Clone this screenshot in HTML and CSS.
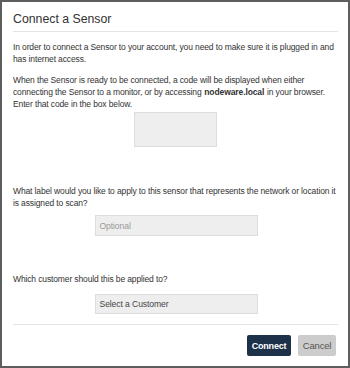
FILE: index.html
```html
<!DOCTYPE html>
<html>
<head>
<meta charset="utf-8">
<link rel="stylesheet" href="styles.css">
</head>
<body>
<div class="modal">
  <div class="modal-header"><h1 class="title">Connect a Sensor</h1></div>
  <div class="modal-body">
    <p class="text p1">In order to connect a Sensor to your account, you need to make sure it is plugged in and has internet access.</p>
    <p class="text p2">When the Sensor is ready to be connected, a code will be displayed when either connecting the Sensor to a monitor, or by accessing <b class="host">nodeware.local</b> in your browser. Enter that code in the box below.</p>
    <div class="center"><div class="code-box"></div></div>
    <p class="text q1">What label would you like to apply to this sensor that represents the network or location it is assigned to scan?</p>
    <div class="center"><div class="field placeholder">Optional</div></div>
    <p class="text q2">Which customer should this be applied to?</p>
    <div class="center"><div class="field select">Select a Customer</div></div>
  </div>
  <div class="modal-footer">
    <button class="btn btn-primary">Connect</button>
    <button class="btn btn-cancel">Cancel</button>
  </div>
</div>
</body>
</html>
```

FILE: styles.css
```css
html, body {
  margin: 0;
  padding: 0;
  background: #fff;
}
body {
  font-family: "Liberation Sans", Arial, sans-serif;
  color: #333;
}
.modal {
  width: 350px;
  height: 368px;
  box-sizing: border-box;
  border: 2px solid #5e5e5e;
  padding: 0 10px 0 11px;
  display: flex;
  flex-direction: column;
}
.modal-header {
  box-sizing: border-box;
  height: 30px;
  padding-top: 10px;
  border-bottom: 1px solid #e3e3e3;
}
.title {
  margin: 0;
  font-size: 12.3px;
  line-height: 14px;
  font-weight: normal;
  color: #333;
}
.modal-body {
  flex: 1;
  padding-top: 9px;
}
.text {
  margin: 0;
  font-size: 8.5px;
  line-height: 12px;
  letter-spacing: -0.13px;
}
.host {
  letter-spacing: -0.1px;
  margin: 0 0.5px;
}
.p2 { margin-top: 9px; }
.center {
  display: flex;
  justify-content: center;
}
.code-box {
  margin-top: 2px;
  width: 81px;
  height: 33px;
  background: #eeeeee;
  border: 1px solid #dddddd;
  margin-left: -1px;
}
.q1 { margin-top: 38px; }
.field {
  box-sizing: border-box;
  width: 163px;
  background: #eeeeee;
  border: 1px solid #dddddd;
  font-size: 8.6px;
  letter-spacing: -0.1px;
  padding-left: 4px;
  display: flex;
  align-items: center;
  margin-left: 1px;
}
.placeholder {
  margin-top: 6px;
  height: 21px;
  color: #999;
}
.q2 { margin-top: 37px; }
.select {
  margin-top: 9px;
  height: 20px;
  color: #444;
}
.modal-footer {
  border-top: 1px solid #e3e3e3;
  height: 42px;
  box-sizing: border-box;
  display: flex;
  justify-content: flex-end;
  align-items: flex-start;
  padding-top: 10px;
  padding-right: 2px;
  gap: 7px;
}
.btn {
  font-family: "Liberation Sans", Arial, sans-serif;
  font-size: 9px;
  height: 21px;
  border: none;
  border-radius: 2px;
  padding: 0;
  letter-spacing: -0.2px;
}
.btn-primary {
  background: #1d3149;
  color: #fff;
  font-weight: bold;
  width: 44px;
}
.btn-cancel {
  background: #cccccc;
  color: #555;
  width: 38px;
  font-size: 9.5px;
}
```
